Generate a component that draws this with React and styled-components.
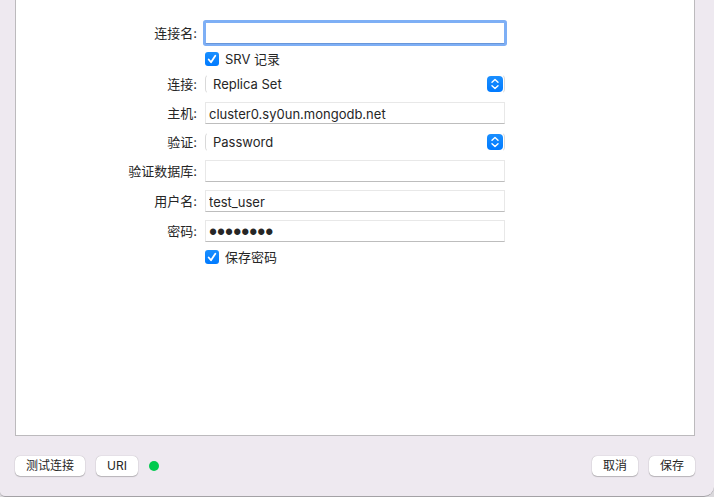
import { useState } from "react";
import styled, { createGlobalStyle } from "styled-components";

const GlobalStyle = createGlobalStyle`
  * {
    box-sizing: border-box;
  }

  body {
    margin: 0;
    background: #dad8dc;
    color: #262626;
  }

  body, button, input, select {
    font-family: Inter, "Noto Sans CJK SC", sans-serif;
    font-size: 13px;
    line-height: 18px;
  }
`;

const Window = styled.main`
  display: flex;
  flex-direction: column;
  min-height: 100vh;
  background: #eee9f0;
  border-bottom: 1px solid #a3a1a5;
  border-radius: 0 0 10px 5px;
`;

const Panel = styled.section`
  flex: 1;
  margin: 0 19px 0 15px;
  padding: 22px 20px 22px 0;
  background: #fff;
  border: 1px solid #bcbabd;
  border-top: 0;
`;

const Form = styled.form`
  display: grid;
  grid-template-columns: 181px minmax(0, 300px);
  column-gap: 8px;
  row-gap: 8px;
  align-items: center;
`;

const Label = styled.label`
  text-align: right;
  line-height: 20px;
`;

const TextInput = styled.input`
  width: 100%;
  height: 22px;
  padding: 2px 3px 0;
  color: #262626;
  background: #fff;
  border: 1px solid #e8e8e8;
  border-bottom-color: #bdbdbd;
  border-radius: 0;
  outline: none;

  &[type="password"] {
    font-family: "Liberation Sans", sans-serif;
    font-size: 23px;
  }

  &:focus {
    border-color: #7eaff5;
    border-bottom-color: #6896da;
    box-shadow: 0 0 0 2px #7eaff5;
    border-radius: 1px;
  }
`;

const SelectWrapper = styled.div`
  position: relative;
  height: 20px;
`;

const Select = styled.select`
  appearance: none;
  width: 100%;
  height: 20px;
  padding: 0 24px 0 7px;
  color: #262626;
  background: #fff;
  border: 1px solid #d9d9d9;
  border-top-color: transparent;
  border-bottom-color: transparent;
  border-radius: 5px;
  outline: none;
`;

const Arrows = styled.svg`
  position: absolute;
  top: 2px;
  right: 2px;
  width: 16px;
  height: 16px;
  pointer-events: none;
`;

const CheckRow = styled.label`
  grid-column: 2;
  display: flex;
  align-items: center;
  gap: 6px;
  height: 14px;
`;

const Checkbox = styled.input`
  appearance: none;
  width: 14px;
  height: 14px;
  margin: 0;
  border: 1px solid #c4c4c4;
  border-radius: 3px;
  background: #fff;

  &:checked {
    border: 0;
    background: linear-gradient(#1a8fff, #007aff);
  }
`;

const CheckBoxWrapper = styled.span`
  position: relative;
  display: flex;
`;

const Tick = styled.svg`
  position: absolute;
  inset: 0;
  width: 14px;
  height: 14px;
  pointer-events: none;
`;

const Footer = styled.footer`
  display: flex;
  align-items: center;
  gap: 11px;
  padding: 20px 19px 20px 15px;
`;

const Button = styled.button`
  height: 20px;
  padding: 0 11px;
  font-size: 12px;
  color: #262626;
  background: #fff;
  border: 0;
  border-radius: 5px;
  box-shadow: 0 0 1px rgba(0, 0, 0, 0.35), 0 1px 1px rgba(0, 0, 0, 0.2);
  white-space: nowrap;
`;

const Status = styled.span`
  flex: 1;

  &::before {
    content: "";
    display: block;
    width: 10px;
    height: 10px;
    border-radius: 50%;
    background: #00ca4e;
  }
`;

const TextField = ({ id, label, ...rest }) => (
  <>
    <Label htmlFor={id}>{label}:</Label>
    <TextInput id={id} autoComplete="off" {...rest} />
  </>
);

const SelectField = ({ id, label, options }) => (
  <>
    <Label htmlFor={id}>{label}:</Label>
    <SelectWrapper>
      <Select id={id}>
        {options.map((option) => (
          <option key={option}>{option}</option>
        ))}
      </Select>
      <Arrows viewBox="0 0 16 16" aria-hidden="true">
        <defs>
          <linearGradient id={`${id}-fill`} x2="0" y2="1">
            <stop stopColor="#1a8fff" />
            <stop offset="1" stopColor="#007aff" />
          </linearGradient>
        </defs>
        <rect width="16" height="16" rx="4" fill={`url(#${id}-fill)`} />
        <path
          d="M5 6.3 8 3.5l3 2.8M5 9.7l3 2.8 3-2.8"
          fill="none"
          stroke="#fff"
          strokeWidth="1.4"
          strokeLinecap="round"
          strokeLinejoin="round"
        />
      </Arrows>
    </SelectWrapper>
  </>
);

const CheckField = ({ label }) => {
  const [checked, setChecked] = useState(true);

  return (
    <CheckRow>
      <CheckBoxWrapper>
        <Checkbox
          type="checkbox"
          checked={checked}
          onChange={(e) => setChecked(e.target.checked)}
        />
        {checked && (
          <Tick viewBox="0 0 14 14" aria-hidden="true">
            <path
              d="M3.7 7.5 6 10.3l4.3-6.6"
              fill="none"
              stroke="#fff"
              strokeWidth="1.8"
              strokeLinecap="round"
              strokeLinejoin="round"
            />
          </Tick>
        )}
      </CheckBoxWrapper>
      {label}
    </CheckRow>
  );
};

const App = () => {
  return (
    <>
      <GlobalStyle />
      <Window>
        <Panel>
          <Form id="connection" onSubmit={(e) => e.preventDefault()}>
            <TextField id="name" label="连接名" autoFocus />
            <CheckField label="SRV 记录" />
            <SelectField
              id="type"
              label="连接"
              options={["Replica Set", "Standalone", "Sharded Cluster"]}
            />
            <TextField
              id="host"
              label="主机"
              defaultValue="cluster0.sy0un.mongodb.net"
            />
            <SelectField
              id="auth"
              label="验证"
              options={["Password", "None", "X.509"]}
            />
            <TextField id="authDb" label="验证数据库" />
            <TextField id="user" label="用户名" defaultValue="test_user" />
            <TextField
              id="password"
              label="密码"
              type="password"
              defaultValue="password"
            />
            <CheckField label="保存密码" />
          </Form>
        </Panel>
        <Footer>
          <Button type="button">测试连接</Button>
          <Button type="button">URI</Button>
          <Status role="status" aria-label="OK" />
          <Button type="button">取消</Button>
          <Button type="submit" form="connection">
            保存
          </Button>
        </Footer>
      </Window>
    </>
  );
};

export default App;
